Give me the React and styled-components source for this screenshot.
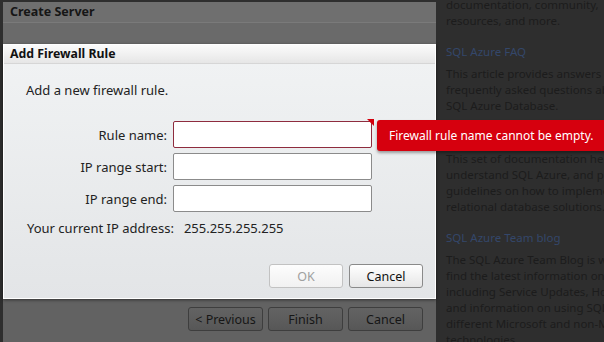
import React from "react";
import styled, { createGlobalStyle } from "styled-components";

const GlobalStyle = createGlobalStyle`
  html, body {
    margin: 0;
    padding: 0;
    width: 604px;
    height: 342px;
    overflow: hidden;
    background: #2e2e2e;
    font-family: "Noto Sans", "Open Sans", sans-serif;
  }
`;

const sidebar = [
  { type: "p", lines: ["documentation, community,", "resources, and more."], top: -3 },
  { type: "a", text: "SQL Azure FAQ" },
  { type: "p", lines: ["This article provides answers to", "frequently asked questions about", "SQL Azure Database."] },
  { type: "a", text: "SQL Azure documentation" },
  {
    type: "p",
    lines: [
      "This set of documentation helps you",
      "understand SQL Azure, and provides",
      "guidelines on how to implement",
      "relational database solutions.",
    ],
  },
  { type: "a", text: "SQL Azure Team blog" },
  {
    type: "p",
    lines: [
      "The SQL Azure Team Blog is where you",
      "find the latest information on SQL Azure",
      "including Service Updates, How-to's",
      "and information on using SQL Azure with",
      "different Microsoft and non-Microsoft",
      "technologies.",
    ],
  },
];

export default function App() {
  return (
    <>
      <GlobalStyle />
      <Page>
        <Wizard>
          <WizardTitle>Create Server</WizardTitle>
          <WizardBody>
            <Dialog>
              <DialogTitle>Add Firewall Rule</DialogTitle>
              <DialogBody>
                <Intro>Add a new firewall rule.</Intro>
                <Form>
                  <Label>Rule name:</Label>
                  <FieldWrap>
                    <Input $error />
                    <ErrorTip>Firewall rule name cannot be empty.</ErrorTip>
                  </FieldWrap>
                  <Label>IP range start:</Label>
                  <FieldWrap>
                    <Input />
                  </FieldWrap>
                  <Label>IP range end:</Label>
                  <FieldWrap>
                    <Input />
                  </FieldWrap>
                </Form>
                <IpRow>
                  <span>Your current IP address:</span>
                  <span>255.255.255.255</span>
                </IpRow>
                <DialogActions>
                  <LightButton disabled>OK</LightButton>
                  <LightButton>Cancel</LightButton>
                </DialogActions>
              </DialogBody>
            </Dialog>
          </WizardBody>
          <WizardFooter>
            <DarkButton>&lt; Previous</DarkButton>
            <DarkButton>Finish</DarkButton>
            <DarkButton>Cancel</DarkButton>
          </WizardFooter>
        </Wizard>
        <Sidebar>
          {sidebar.map((item, i) =>
            item.type === "a" ? (
              <SideLink key={i}>{item.text}</SideLink>
            ) : (
              <SideText key={i} $top={item.top}>
                {item.lines.map((l, j) => (
                  <div key={j}>{l}</div>
                ))}
              </SideText>
            )
          )}
        </Sidebar>
      </Page>
    </>
  );
}

const Page = styled.div`
  display: flex;
  width: 604px;
  height: 342px;
  background: #2e2e2e;
`;

const Wizard = styled.div`
  width: 433px;
  margin: 2px 0 0 3px;
  display: flex;
  flex-direction: column;
  background: #6a6a6a;
  flex-shrink: 0;
`;

const WizardTitle = styled.div`
  height: 20px;
  line-height: 20px;
  padding-left: 7px;
  font-size: 12.5px;
  font-weight: bold;
  color: #161616;
  background: #6f6f6f;
  border-bottom: 1px solid #7a7a7a;
`;

const WizardBody = styled.div`
  padding-top: 21px;
  position: relative;
  z-index: 1;
`;

const Dialog = styled.div`
  height: 255px;
  display: flex;
  flex-direction: column;
  background: linear-gradient(#f1f3f4, #e3e5e7);
  border: 1px solid #fff;
  box-sizing: border-box;
  box-shadow: 0 1px 3px rgba(0, 0, 0, 0.5);
`;

const DialogTitle = styled.div`
  height: 18px;
  line-height: 18px;
  padding-left: 6px;
  font-size: 12.3px;
  font-weight: bold;
  color: #111;
  background: linear-gradient(#fbfbfb, #e6e6e6);
  border-bottom: 1px solid #d6d6d6;
`;

const DialogBody = styled.div`
  flex: 1;
  display: flex;
  flex-direction: column;
  padding: 16px 12px 10px 22px;
  font-size: 13px;
  color: #222;
`;

const Intro = styled.div`
  line-height: 20px;
`;

const Form = styled.div`
  display: grid;
  grid-template-columns: 142px 199px;
  column-gap: 5px;
  row-gap: 5px;
  margin-top: 21px;
  align-items: center;
`;

const Label = styled.div`
  text-align: right;
  padding-right: 1px;
`;

const FieldWrap = styled.div`
  position: relative;
  height: 27px;
`;

const Input = styled.div`
  height: 27px;
  box-sizing: border-box;
  background: #fff;
  border: 1px solid ${(p) => (p.$error ? "#8e2c3e" : "#8b8b8b")};
  border-radius: 2px;

  ${(p) =>
    p.$error &&
    `
    &::after {
      content: "";
      position: absolute;
      top: -2px;
      right: -2px;
      border-top: 7px solid #d4000d;
      border-left: 7px solid transparent;
    }
  `}
`;

const ErrorTip = styled.div`
  position: absolute;
  left: 204px;
  top: -1px;
  width: 240px;
  height: 31px;
  line-height: 31px;
  padding-left: 12px;
  box-sizing: border-box;
  background: #d6000e;
  color: #fff;
  font-size: 12px;
  border-radius: 3px 0 0 3px;
  box-shadow: 0 2px 3px rgba(0, 0, 0, 0.35);
  white-space: nowrap;
`;

const IpRow = styled.div`
  display: flex;
  gap: 10px;
  margin-top: 8px;
  margin-left: 1px;
  line-height: 16px;
`;

const DialogActions = styled.div`
  margin-top: auto;
  display: flex;
  justify-content: flex-end;
  gap: 6px;
`;

const LightButton = styled.button`
  width: 74px;
  height: 24px;
  font-family: inherit;
  font-size: 12.5px;
  color: ${(p) => (p.disabled ? "#a0a0a0" : "#111")};
  background: ${(p) => (p.disabled ? "linear-gradient(#fdfdfd, #f1f1f1)" : "linear-gradient(#ffffff, #e6e6e6)")};
  border: 1px solid ${(p) => (p.disabled ? "#c2c2c2" : "#8a8a8a")};
  border-radius: 3px;
  padding: 0;
`;

const WizardFooter = styled.div`
  flex: 1;
  display: flex;
  justify-content: flex-end;
  align-items: flex-start;
  gap: 5px;
  padding: 8px 13px 0 0;
  background: #626262;
`;

const DarkButton = styled.button`
  width: 75px;
  height: 24px;
  font-family: inherit;
  font-size: 12.5px;
  color: #161616;
  background: linear-gradient(#636363, #575757);
  border: 1px solid #3e3e3e;
  border-radius: 3px;
  padding: 0;
`;

const Sidebar = styled.div`
  flex: 1;
  padding: 0 0 0 10px;
  font-size: 11.5px;
  line-height: 16px;
  color: #1c1c1c;
  white-space: nowrap;
  overflow: hidden;
`;

const SideText = styled.div`
  margin-top: ${(p) => (p.$top !== undefined ? p.$top : 6)}px;
`;

const SideLink = styled.div`
  margin-top: 15px;
  color: #34476a;
`;
